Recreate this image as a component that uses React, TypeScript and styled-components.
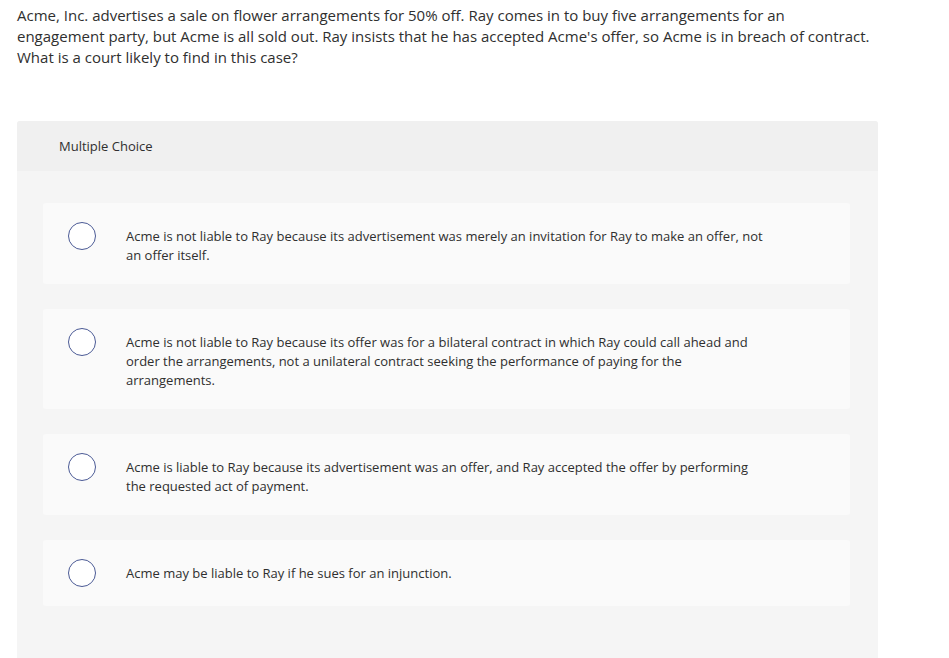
import React from "react";
import styled, { createGlobalStyle } from "styled-components";

const Global = createGlobalStyle`
  html, body { margin: 0; padding: 0; background: #ffffff; }
  body { font-family: "Open Sans", "Liberation Sans", sans-serif; color: #2f2f2f; }
`;

const Page = styled.div`
  padding: 5px 0 0 17px;
  width: 861px;
`;

const Question = styled.p`
  margin: 0;
  font-size: 15px;
  line-height: 21px;
  color: #2f2f2f;
  width: 853px;
`;

const Panel = styled.section`
  margin-top: 53px;
  width: 861px;
  background: #f5f5f5;
  border-radius: 3px 3px 0 0;
  overflow: hidden;
`;

const PanelHeader = styled.div`
  height: 50px;
  display: flex;
  align-items: center;
  padding-left: 42px;
  background: #f0f0f0;
  font-size: 13px;
  color: #2f2f2f;
`;

const Choices = styled.div`
  display: flex;
  flex-direction: column;
  gap: 25px;
  padding: 32px 28px 60px 26px;
`;

const Choice = styled.label`
  display: flex;
  align-items: flex-start;
  padding: 19px 0 19px 25px;
  background: #fafafa;
  border-radius: 3px;
  cursor: pointer;
`;

const Radio = styled.span`
  flex: 0 0 auto;
  width: 28px;
  height: 28px;
  box-sizing: border-box;
  border: 1.5px solid #4b5a95;
  border-radius: 50%;
  background: #ffffff;
`;

const ChoiceText = styled.span`
  margin: 5px 0 0 30px;
  max-width: 641px;
  font-size: 13px;
  line-height: 19px;
  color: #2f2f2f;
`;

const choices = [
  "Acme is not liable to Ray because its advertisement was merely an invitation for Ray to make an offer, not an offer itself.",
  "Acme is not liable to Ray because its offer was for a bilateral contract in which Ray could call ahead and order the arrangements, not a unilateral contract seeking the performance of paying for the arrangements.",
  "Acme is liable to Ray because its advertisement was an offer, and Ray accepted the offer by performing the requested act of payment.",
  "Acme may be liable to Ray if he sues for an injunction.",
];

export default function App() {
  return (
    <>
      <Global />
      <Page>
        <Question>
          Acme, Inc. advertises a sale on flower arrangements for 50% off. Ray comes in to buy five arrangements for an
          engagement party, but Acme is all sold out. Ray insists that he has accepted Acme's offer, so Acme is in breach
          of contract. What is a court likely to find in this case?
        </Question>
        <Panel>
          <PanelHeader>Multiple Choice</PanelHeader>
          <Choices>
            {choices.map((c) => (
              <Choice key={c}>
                <Radio />
                <ChoiceText>{c}</ChoiceText>
              </Choice>
            ))}
          </Choices>
        </Panel>
      </Page>
    </>
  );
}
